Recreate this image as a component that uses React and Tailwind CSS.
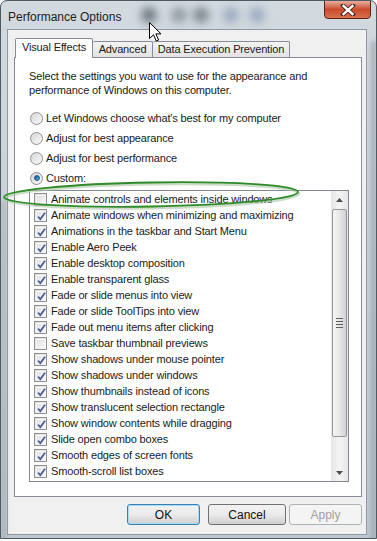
import React from 'react'

const items = [
  ['Animate controls and elements inside windows', false],
  ['Animate windows when minimizing and maximizing', true],
  ['Animations in the taskbar and Start Menu', true],
  ['Enable Aero Peek', true],
  ['Enable desktop composition', true],
  ['Enable transparent glass', true],
  ['Fade or slide menus into view', true],
  ['Fade or slide ToolTips into view', true],
  ['Fade out menu items after clicking', true],
  ['Save taskbar thumbnail previews', false],
  ['Show shadows under mouse pointer', true],
  ['Show shadows under windows', true],
  ['Show thumbnails instead of icons', true],
  ['Show translucent selection rectangle', true],
  ['Show window contents while dragging', true],
  ['Slide open combo boxes', true],
  ['Smooth edges of screen fonts', true],
  ['Smooth-scroll list boxes', true],
]

const radios = [
  ["Let Windows choose what's best for my computer", false],
  ['Adjust for best appearance', false],
  ['Adjust for best performance', false],
  ['Custom:', true],
]

function CheckBox({ checked }) {
  return (
    <div className='w-[13px] h-[13px] border border-[#8e8f8f] bg-gradient-to-br from-[#dcdcdc] to-[#fbfbfb] p-[1px] shrink-0'>
      <div className='w-full h-full border border-[#f4f4f4] relative'>
        {checked && (
          <svg width='13' height='13' viewBox='0 0 13 13' className='absolute -left-[2px] -top-[2px]'>
            <path d='M3 6.5 L5.3 9.3 L10 2.8' fill='none' stroke='#4a5f97' strokeWidth='1.8' />
          </svg>
        )}
      </div>
    </div>
  )
}

function Radio({ checked }) {
  return (
    <div className='w-[13px] h-[13px] rounded-full border border-[#8f8f8f] bg-gradient-to-br from-[#d6d6d6] to-[#fafafa] flex items-center justify-center shrink-0'>
      {checked && <div className='w-[6px] h-[6px] rounded-full bg-gradient-to-br from-[#0c4f85] to-[#5bbbef] border border-[#1d5f8f]' />}
    </div>
  )
}

function Button({ children, w, focus, disabled }) {
  return (
    <div className={`h-[21px] ${w} rounded-[3px] border ${focus ? 'border-[#3c7fb1] shadow-[inset_0_0_0_1px_#9fe0f8]' : disabled ? 'border-[#adb2b5]' : 'border-[#707070]'} ${disabled ? 'bg-[#f4f4f4] text-[#a0a0a0]' : 'bg-gradient-to-b from-[#f2f2f2] via-[#ebebeb] to-[#cfcfcf] text-[#111]'} flex items-center justify-center`}>
      {children}
    </div>
  )
}

export default function App() {
  return (
    <div className='w-[377px] h-[541px] bg-white relative overflow-hidden text-[11px] tracking-[-0.15px] text-[#1a1a1a]' style={{ fontFamily: '"Liberation Sans", Arial, sans-serif' }}>
      <div className='w-[377px] h-[539px] rounded-t-[7px] border border-[#4f5962] bg-gradient-to-b from-[#d2d9df] via-[#c7cfd6] to-[#bfc7cf] flex flex-col relative overflow-hidden'>
        {/* glass blur blobs */}
        <div className='absolute left-[140px] top-[6px] w-[16px] h-[16px] rounded-full bg-[#4c5560] blur-[4px] opacity-70' />
        <div className='absolute left-[170px] top-[6px] w-[16px] h-[16px] rounded-full bg-[#59626c] blur-[4px] opacity-50' />
        <div className='absolute left-[192px] top-[6px] w-[16px] h-[16px] rounded-full bg-[#4c5560] blur-[4px] opacity-60' />
        <div className='absolute left-[222px] top-[6px] w-[16px] h-[16px] rounded-full bg-[#6b82a8] blur-[4px] opacity-50' />
        <div className='absolute left-[248px] top-[6px] w-[16px] h-[16px] rounded-full bg-[#6b82a8] blur-[4px] opacity-50' />
        <div className='absolute left-[0px] top-[200px] w-[5px] h-[340px] bg-[#9aa2a9] blur-[2px] opacity-50' />
        <div className='absolute right-[0px] top-[40px] w-[5px] h-[500px] bg-[#8f979e] blur-[2px] opacity-60' />

        <div className='h-[28px] flex items-start justify-between relative'>
          <span className='ml-[7px] mt-[7px] text-[12px] tracking-normal text-[#1e1e1e]'>Performance Options</span>
          <div className='mr-[5px] w-[47px] h-[19px] -mt-px rounded-b-[4px] border border-[#5c2418] bg-gradient-to-b from-[#e6ae9f] via-[#c9492c] to-[#d7714e] flex items-center justify-center'>
            <svg width='16' height='12' viewBox='0 0 16 12'>
              <path d='M3 1.5 L13 10.5 M13 1.5 L3 10.5' stroke='#3d1d18' strokeWidth='4' strokeLinecap='square' />
              <path d='M3.5 2 L12.5 10 M12.5 2 L3.5 10' stroke='#ffffff' strokeWidth='2.4' strokeLinecap='square' />
            </svg>
          </div>
        </div>

        <div className='ml-[6px] w-[360px] h-[506px] border border-[#8d99a4] bg-[#f0f0f0] flex flex-col pl-[6px] pr-[5px] pt-[8px]'>
          <div className='flex items-end h-[19px] pl-[1px] whitespace-nowrap'>
            <div className='w-[78px] h-[20px] -mb-px relative z-10 bg-white border border-b-0 border-[#898c95] rounded-t-[2px] flex items-center justify-center pb-[2px]'>Visual Effects</div>
            <div className='w-[60px] h-[16px] bg-gradient-to-b from-[#f3f3f3] to-[#e3e3e3] border border-b-0 border-l-0 border-[#898c95] rounded-t-[2px] flex items-center justify-center'>Advanced</div>
            <div className='w-[137px] h-[16px] bg-gradient-to-b from-[#f3f3f3] to-[#e3e3e3] border border-b-0 border-l-0 border-[#898c95] rounded-t-[2px] flex items-center justify-center'>Data Execution Prevention</div>
          </div>
          <div className='w-[348px] h-[440px] bg-white border border-[#898c95] pl-[14px] pt-[11px]'>
            <p className='leading-[14px]'>Select the settings you want to use for the appearance and<br />performance of Windows on this computer.</p>
            <div className='mt-[11px] flex flex-col'>
              {radios.map(([label, on]) => (
                <div key={label} className='h-[20px] flex items-center gap-[3px] ml-[1px]'>
                  <Radio checked={on} />
                  <span>{label}</span>
                </div>
              ))}
            </div>
            <div className='mt-[2px] w-[320px] h-[292px] border border-[#828790] bg-white flex'>
              <div className='flex-1 flex flex-col overflow-hidden'>
                {items.map(([label, on]) => (
                  <div key={label} className='h-[16px] flex items-center gap-[4px] pl-[4px] whitespace-nowrap'>
                    <CheckBox checked={on} />
                    <span>{label}</span>
                  </div>
                ))}
              </div>
              <div className='w-[17px] h-full bg-gradient-to-r from-[#e6e6e6] via-[#f4f4f4] to-[#e6e6e6] flex flex-col items-center'>
                <div className='h-[17px] w-full flex items-center justify-center'>
                  <svg width='7' height='4' viewBox='0 0 7 4'><path d='M0 4 L3.5 0 L7 4 Z' fill='#4d4d4d' /></svg>
                </div>
                <div className='mt-[1px] w-[15px] h-[228px] rounded-[2px] border border-[#979797] bg-gradient-to-r from-[#f4f4f4] via-[#e8e8e8] to-[#d0d0d0] flex flex-col items-center justify-center gap-[2px]'>
                  <div className='w-[7px] h-px bg-[#5d5d5d]' />
                  <div className='w-[7px] h-px bg-[#5d5d5d]' />
                  <div className='w-[7px] h-px bg-[#5d5d5d]' />
                  <div className='w-[7px] h-px bg-[#5d5d5d]' />
                </div>
                <div className='flex-1' />
                <div className='h-[17px] w-full flex items-center justify-center'>
                  <svg width='7' height='4' viewBox='0 0 7 4'><path d='M0 0 L3.5 4 L7 0 Z' fill='#4d4d4d' /></svg>
                </div>
              </div>
            </div>
          </div>
          <div className='mt-[7px] flex justify-end w-[348px] text-[12px] tracking-normal'>
            <Button w='w-[73px]' focus>OK</Button>
            <div className='w-[8px]' />
            <Button w='w-[78px]'>Cancel</Button>
            <div className='w-[3px]' />
            <Button w='w-[73px]' disabled>Apply</Button>
          </div>
        </div>
      </div>

      {/* hand-drawn highlight ellipse */}
      <svg className='absolute left-0 top-0 pointer-events-none' width='377' height='541'>
        <ellipse cx='152' cy='196' rx='147' ry='12' fill='none' stroke='#a9c7a0' strokeWidth='3' opacity='0.6' transform='rotate(-1 152 196)' />
        <ellipse cx='151' cy='194.5' rx='147' ry='12' fill='none' stroke='#2f8a2a' strokeWidth='1.8' transform='rotate(-1 151 194.5)' />
      </svg>

      {/* mouse pointer */}
      <svg className='absolute left-[149px] top-[22px] pointer-events-none' width='14' height='21' viewBox='0 0 14 21'>
        <path d='M0.5 0.5 L0.5 16.5 L4.5 12.8 L7.3 19 L9.6 18 L6.9 11.9 L12 11.9 Z' fill='#ffffff' stroke='#000000' strokeWidth='1' strokeLinejoin='round' />
      </svg>
    </div>
  )
}
